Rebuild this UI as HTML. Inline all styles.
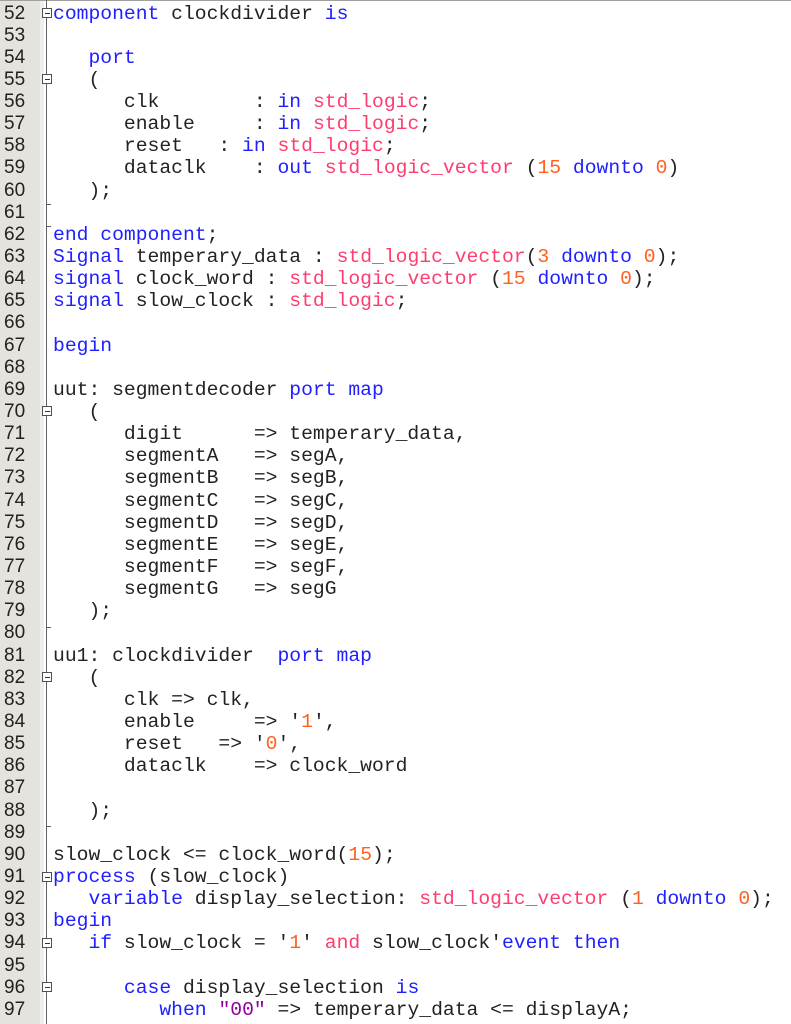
<!DOCTYPE html>
<html><head><meta charset="utf-8"><style>
html,body{margin:0;padding:0;background:#fff;width:791px;height:1024px;overflow:hidden;position:relative}
#g{position:absolute;left:0;top:0;width:40px;height:1024px;background:#e4e3dd}
#g2{position:absolute;left:40px;top:0;width:4px;height:1024px;background:#eeeeea}
#top{position:absolute;left:0;top:0;width:791px;height:1px;background:#a0a0a0}
#vl{position:absolute;left:46px;top:0;width:1px;height:1024px;background:#606060}
.tk{position:absolute;left:46px;width:5px;height:1px;background:#606060}
.bx{position:absolute;left:42px;width:8px;height:8px;border:1px solid #505050;background:#fff}
.bx::after{content:"";position:absolute;left:2px;top:4px;width:5px;height:1px;background:#303030}
#n{position:absolute;left:4px;top:2.5px;font:19px/22.133px "Liberation Sans",sans-serif;color:#222;white-space:pre}
#c{position:absolute;left:53px;top:2.5px;font:19.7px/22.133px "Liberation Mono",monospace;color:#222;white-space:pre;margin:0}
.k{color:#2020ff}.t{color:#ff3c6e}.d{color:#ff6020}.s{color:#9000a0}
</style></head><body>
<div id="g"></div><div id="g2"></div><div id="top"></div><div id="vl"></div>
<div class="tk" style="top:204px"></div>
<div class="tk" style="top:226px"></div>
<div class="tk" style="top:627px"></div>
<div class="tk" style="top:826px"></div>
<div class="bx" style="top:8px"></div>
<div class="bx" style="top:74px"></div>
<div class="bx" style="top:406px"></div>
<div class="bx" style="top:672px"></div>
<div class="bx" style="top:872px"></div>
<div class="bx" style="top:938px"></div>
<div class="bx" style="top:982px"></div>
<div id="n">52
53
54
55
56
57
58
59
60
61
62
63
64
65
66
67
68
69
70
71
72
73
74
75
76
77
78
79
80
81
82
83
84
85
86
87
88
89
90
91
92
93
94
95
96
97</div>
<pre id="c"><span class="k">component</span> clockdivider <span class="k">is</span>

   <span class="k">port</span>
   (
      clk        : <span class="k">in</span> <span class="t">std_logic</span>;
      enable     : <span class="k">in</span> <span class="t">std_logic</span>;
      reset   : <span class="k">in</span> <span class="t">std_logic</span>;
      dataclk    : <span class="k">out</span> <span class="t">std_logic_vector</span> (<span class="d">15</span> <span class="k">downto</span> <span class="d">0</span>)
   );

<span class="k">end component</span>;
<span class="k">Signal</span> temperary_data : <span class="t">std_logic_vector</span>(<span class="d">3</span> <span class="k">downto</span> <span class="d">0</span>);
<span class="k">signal</span> clock_word : <span class="t">std_logic_vector</span> (<span class="d">15</span> <span class="k">downto</span> <span class="d">0</span>);
<span class="k">signal</span> slow_clock : <span class="t">std_logic</span>;

<span class="k">begin</span>

uut: segmentdecoder <span class="k">port map</span>
   (
      digit      =&gt; temperary_data,
      segmentA   =&gt; segA,
      segmentB   =&gt; segB,
      segmentC   =&gt; segC,
      segmentD   =&gt; segD,
      segmentE   =&gt; segE,
      segmentF   =&gt; segF,
      segmentG   =&gt; segG
   );

uu1: clockdivider  <span class="k">port map</span>
   (
      clk =&gt; clk,
      enable     =&gt; '<span class="d">1</span>',
      reset   =&gt; '<span class="d">0</span>',
      dataclk    =&gt; clock_word

   );

slow_clock &lt;= clock_word(<span class="d">15</span>);
<span class="k">process</span> (slow_clock)
   <span class="k">variable</span> display_selection: <span class="t">std_logic_vector</span> (<span class="d">1</span> <span class="k">downto</span> <span class="d">0</span>);
<span class="k">begin</span>
   <span class="k">if</span> slow_clock = '<span class="d">1</span>' <span class="t">and</span> slow_clock'<span class="k">event</span> <span class="k">then</span>

      <span class="k">case</span> display_selection <span class="k">is</span>
         <span class="k">when</span> <span class="s">"00"</span> =&gt; temperary_data &lt;= displayA;</pre>
</body></html>
